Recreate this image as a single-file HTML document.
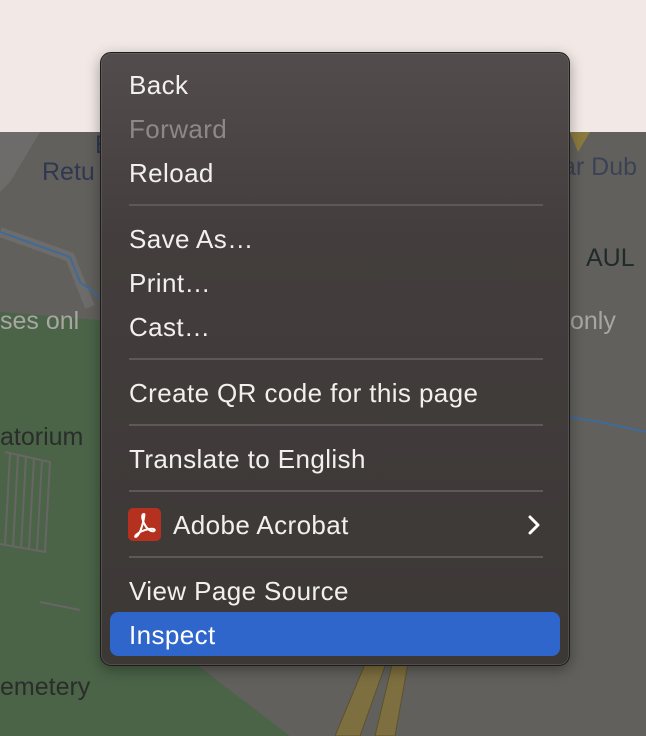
<!DOCTYPE html>
<html><head><meta charset="utf-8"><style>
html,body{margin:0;padding:0;width:646px;height:736px;overflow:hidden;font-family:"Liberation Sans",sans-serif;}
.top{position:absolute;left:0;top:0;width:646px;height:132px;background:#f2e9e6;}
.map{position:absolute;left:0;top:132px;width:646px;height:604px;background:#62605c;overflow:hidden;}
.lbl{position:absolute;font-size:25px;white-space:nowrap;}
.menu{position:absolute;left:100px;top:52px;width:468px;height:612px;border-radius:11px;
 background:linear-gradient(180deg,#524d4c 0%,#433e3d 30%,#3c3836 100%);border:1px solid #1e1c1b;
 box-shadow:0 0 0 1px rgba(120,120,120,.35) inset,0 4px 14px rgba(0,0,0,.35);}
.it{position:absolute;left:28px;font-size:26px;letter-spacing:0.4px;color:#f2f0ee;white-space:nowrap;}
.sep{position:absolute;left:28px;width:414px;height:2px;background:#5d5958;}
.hl{position:absolute;left:9px;top:559px;width:450px;height:44px;background:#2e66cb;border-radius:8px;}
</style></head><body>
<div class="top"></div>
<div class="map">
 <svg width="646" height="604" style="position:absolute;left:0;top:0">
  <polygon points="0,180 100,188 100,604 0,604" fill="#4b6448"/>
  <polygon points="0,500 180,520 290,604 0,604" fill="#4b6448"/>
  <path d="M0,100 L70,125 L80,150 L90,175" stroke="#6e6c6a" stroke-width="10" fill="none"/>
  <path d="M0,100 L70,125 L80,150 L100,165" stroke="#3e6b9a" stroke-width="2" fill="none"/>
  <path d="M570,285 L600,290 L646,300" stroke="#3e6b9a" stroke-width="2" fill="none"/>
  <path d="M0,0 L40,0 L10,50 L0,60Z" fill="#6e6c6a"/>
  <g stroke="#686664" stroke-width="2" fill="none">
   <path d="M5,320 L50,330 L45,420 L0,412"/>
   <path d="M10,322 L5,414 M18,323 L13,415 M26,325 L21,416 M34,326 L29,417 M42,328 L37,418"/>
   <path d="M40,470 L80,478"/>
  </g>
  <path d="M335,604 L370,520 L390,520 L360,604Z M375,604 L395,520 L410,520 L395,604Z" fill="#7d6f3f" stroke="#5c5230"/>
  <path d="M570,0 L590,0 L578,20Z" fill="#8a7a3e"/>
 </svg>
 <div class="lbl" style="left:42px;top:26px;color:#2f3850">Retu</div>
 <div class="lbl" style="left:95px;top:-1px;color:#2f3850">E</div>
 <div class="lbl" style="left:562px;top:21px;color:#3a4256">ar Dub</div>
 <div class="lbl" style="left:586px;top:112px;color:#1f2a2a">AUL</div>
 <div class="lbl" style="left:0;top:175px;color:#a8a6a3">ses onl</div>
 <div class="lbl" style="left:570px;top:175px;color:#a8a6a3">only</div>
 <div class="lbl" style="left:0;top:291px;color:#2a2d2a">atorium</div>
 <div class="lbl" style="left:0;top:541px;color:#2a2d2a">emetery</div>
</div>
<div class="menu">
 <div class="it" style="top:17px">Back</div>
 <div class="it" style="top:61px;color:#8d8987">Forward</div>
 <div class="it" style="top:105px">Reload</div>
 <div class="sep" style="top:151px"></div>
 <div class="it" style="top:171px">Save As…</div>
 <div class="it" style="top:215px">Print…</div>
 <div class="it" style="top:259px">Cast…</div>
 <div class="sep" style="top:305px"></div>
 <div class="it" style="top:325px">Create QR code for this page</div>
 <div class="sep" style="top:371px"></div>
 <div class="it" style="top:391px">Translate to English</div>
 <div class="sep" style="top:437px"></div>
 <svg style="position:absolute;left:27px;top:455px" width="33" height="33" viewBox="0 0 33 33">
  <rect width="33" height="33" rx="5" fill="#b5311f"/>
  <path d="M16,6 C13,6 14,12 17,17 C19,21 23,24 26,23 C28,22 26,20 21,21 C16,22 11,24 8,27 C6,29 8,30 10,27 C13,23 15,15 16,10 C16.5,7 16.5,6 16,6Z" fill="none" stroke="#fff" stroke-width="2" stroke-linejoin="round"/>
 </svg>
 <div class="it" style="left:72px;top:457px">Adobe Acrobat</div>
 <svg style="position:absolute;left:426px;top:462px" width="14" height="20" viewBox="0 0 14 20"><path d="M3,2 L11,10 L3,18" stroke="#fff" stroke-width="3" fill="none" stroke-linecap="round" stroke-linejoin="round"/></svg>
 <div class="sep" style="top:503px"></div>
 <div class="it" style="top:523px">View Page Source</div>
 <div class="hl"></div>
 <div class="it" style="top:567px;color:#fff">Inspect</div>
</div>
</body></html>
